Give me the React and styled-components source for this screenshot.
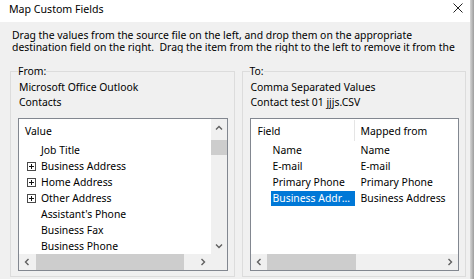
import React from 'react';
import styled, { createGlobalStyle } from 'styled-components';

const GlobalStyle = createGlobalStyle`
  html, body { margin: 0; padding: 0; }
  body {
    width: 474px;
    height: 279px;
    overflow: hidden;
    background: #a4a4a4;
    font-family: "Noto Sans", "Open Sans", sans-serif;
    font-size: 10.4px;
    color: #000;
  }
`;

const Screen = styled.div`
  display: flex;
  height: 279px;
`;

const Dialog = styled.div`
  width: 470px;
  display: flex;
  flex-direction: column;
  background: #f0f0f0;
  overflow: hidden;
`;

const EdgeStrip = styled.div`
  flex: 1;
  background: linear-gradient(90deg, #d6d6d6 0, #9c9c9c 100%);
`;

const TitleBar = styled.div`
  height: 22px;
  flex: none;
  background: #fff;
  display: flex;
  align-items: flex-start;
  justify-content: space-between;
  padding: 2px 7px 0 9px;
  box-sizing: border-box;
  line-height: 14px;
`;

const Title = styled.span`
  font-size: 10.6px;
`;

const CloseIcon = () => (
  <svg width="10" height="10" viewBox="0 0 10 10" style={{ marginTop: 1 }}>
    <path d="M0.5 0.5 L9.5 9.5 M9.5 0.5 L0.5 9.5" stroke="#222" strokeWidth="1" fill="none" />
  </svg>
);

const Description = styled.div`
  padding: 7px 0 0 12px;
  line-height: 12px;
  white-space: pre;
  overflow: hidden;
`;

const Groups = styled.div`
  display: flex;
  gap: 7px;
  padding: 0 4px 0 10px;
  margin-top: 11px;
`;

const Group = styled.fieldset`
  flex: 1;
  min-width: 0;
  margin: 0;
  padding: 0 6px 5px 7px;
  border: 1px solid #dcdcdc;
`;

const Legend = styled.legend`
  padding: 0;
  line-height: 14px;
`;

const Info = styled.div`
  margin-top: 2px;
  padding-left: 1px;
  line-height: 14.5px;
`;

const ListBox = styled.div`
  margin-top: 9px;
  height: 153px;
  box-sizing: border-box;
  border: 1px solid #828790;
  background: #fff;
  display: grid;
  grid-template-columns: 1fr ${p => (p.$vscroll ? '16px' : '0')};
  grid-template-rows: 1fr 16px;
  overflow: hidden;
`;

const Content = styled.div`
  overflow: hidden;
  min-width: 0;
`;

const Header = styled.div`
  height: 22px;
  display: flex;
  line-height: 22px;
  padding-top: 1px;
  box-sizing: border-box;
`;

const HeaderCell = styled.div`
  width: ${p => p.$w || 'auto'};
  flex: ${p => (p.$w ? 'none' : '1')};
  padding-left: ${p => p.$pad}px;
  box-sizing: border-box;
  border-right: ${p => (p.$sep ? '1px solid #e5e5e5' : 'none')};
`;

const Row = styled.div`
  height: 16px;
  box-sizing: border-box;
  padding-top: 2px;
  line-height: 15px;
  display: flex;
  align-items: flex-start;
  white-space: nowrap;
`;

const TreeRow = styled(Row)`
  padding-left: 8px;
`;

const Expander = styled.span`
  width: 9px;
  height: 9px;
  margin: 3px 5px 0 0;
  flex: none;
  display: inline-flex;
`;

const Cell = styled.div`
  width: ${p => p.$w || 'auto'};
  flex: ${p => (p.$w ? 'none' : '1')};
  padding-left: ${p => p.$pad}px;
  box-sizing: border-box;
  overflow: hidden;
  min-width: 0;
`;

const CellText = styled.span`
  display: block;
  padding: 0 2px;
  height: 15px;
  line-height: 15px;
  overflow: hidden;
  text-overflow: ellipsis;
  white-space: nowrap;
  background: ${p => (p.$selected ? '#0078d7' : 'transparent')};
  color: ${p => (p.$selected ? '#fff' : '#000')};
`;

const VScroll = styled.div`
  background: #f0f0f0;
  display: flex;
  flex-direction: column;
`;

const HScroll = styled.div`
  background: #f0f0f0;
  display: flex;
  align-items: stretch;
`;

const Corner = styled.div`
  background: #f0f0f0;
`;

const ArrowBtn = styled.div`
  width: 16px;
  height: ${p => (p.$v ? '17px' : '16px')};
  flex: none;
  display: flex;
  align-items: center;
  justify-content: center;
`;

const Track = styled.div`
  flex: 1;
  display: flex;
  flex-direction: ${p => (p.$v ? 'column' : 'row')};
`;

const Thumb = styled.div`
  background: #cdcdcd;
  flex: none;
`;

const Chevron = ({ dir }) => {
  const paths = {
    up: 'M1 5.5 L4 2.5 L7 5.5',
    down: 'M1 2.5 L4 5.5 L7 2.5',
    left: 'M5.5 1 L2.5 4 L5.5 7',
    right: 'M2.5 1 L5.5 4 L2.5 7',
  };
  return (
    <svg width="8" height="8" viewBox="0 0 8 8">
      <path d={paths[dir]} stroke="#606060" strokeWidth="1.4" fill="none" />
    </svg>
  );
};

const PlusBox = () => (
  <svg width="9" height="9" viewBox="0 0 9 9">
    <rect x="0.5" y="0.5" width="8" height="8" fill="#fff" stroke="#4a4a4a" />
    <path d="M2 4.5 H7 M4.5 2 V7" stroke="#111" strokeWidth="1" />
  </svg>
);

const sourceRows = [
  { label: 'Job Title' },
  { label: 'Business Address', expand: true },
  { label: 'Home Address', expand: true },
  { label: 'Other Address', expand: true },
  { label: "Assistant's Phone" },
  { label: 'Business Fax' },
  { label: 'Business Phone' },
];

const mappedRows = [
  { field: 'Name', from: 'Name' },
  { field: 'E-mail', from: 'E-mail' },
  { field: 'Primary Phone', from: 'Primary Phone' },
  { field: 'Business Address', from: 'Business Address', selected: true },
];

export default function App() {
  return (
    <Screen>
      <GlobalStyle />
      <Dialog>
        <TitleBar>
          <Title>Map Custom Fields</Title>
          <CloseIcon />
        </TitleBar>
        <Description>
          {'Drag the values from the source file on the left, and drop them on the appropriate\n'}
          {'destination field on the right.  Drag the item from the right to the left to remove it from the'}
        </Description>
        <Groups>
          <Group>
            <Legend>From:</Legend>
            <Info>
              Microsoft Office Outlook
              <br />
              Contacts
            </Info>
            <ListBox $vscroll>
              <Content>
                <Header>
                  <HeaderCell $pad={6}>Value</HeaderCell>
                </Header>
                {sourceRows.map(r => (
                  <TreeRow key={r.label}>
                    <Expander>{r.expand && <PlusBox />}</Expander>
                    {r.label}
                  </TreeRow>
                ))}
              </Content>
              <VScroll>
                <ArrowBtn $v><Chevron dir="up" /></ArrowBtn>
                <Track $v>
                  <Thumb style={{ height: 15, marginTop: 4 }} />
                </Track>
                <ArrowBtn $v><Chevron dir="down" /></ArrowBtn>
              </VScroll>
              <HScroll>
                <ArrowBtn><Chevron dir="left" /></ArrowBtn>
                <Track>
                  <Thumb style={{ width: 148, marginLeft: 1 }} />
                </Track>
                <ArrowBtn><Chevron dir="right" /></ArrowBtn>
              </HScroll>
              <Corner />
            </ListBox>
          </Group>
          <Group>
            <Legend>To:</Legend>
            <Info>
              Comma Separated Values
              <br />
              Contact test 01 jjjs.CSV
            </Info>
            <ListBox>
              <Content>
                <Header>
                  <HeaderCell $w="104px" $pad={7} $sep>Field</HeaderCell>
                  <HeaderCell $pad={6}>Mapped from</HeaderCell>
                </Header>
                {mappedRows.map(r => (
                  <Row key={r.field}>
                    <Cell $w="104px" $pad={20}>
                      <CellText $selected={r.selected}>{r.field}</CellText>
                    </Cell>
                    <Cell $pad={4}>
                      <CellText>{r.from}</CellText>
                    </Cell>
                  </Row>
                ))}
              </Content>
              <div />
              <HScroll>
                <ArrowBtn><Chevron dir="left" /></ArrowBtn>
                <Track>
                  <Thumb style={{ width: 89 }} />
                </Track>
                <ArrowBtn><Chevron dir="right" /></ArrowBtn>
              </HScroll>
              <div />
            </ListBox>
          </Group>
        </Groups>
      </Dialog>
      <EdgeStrip />
    </Screen>
  );
}
